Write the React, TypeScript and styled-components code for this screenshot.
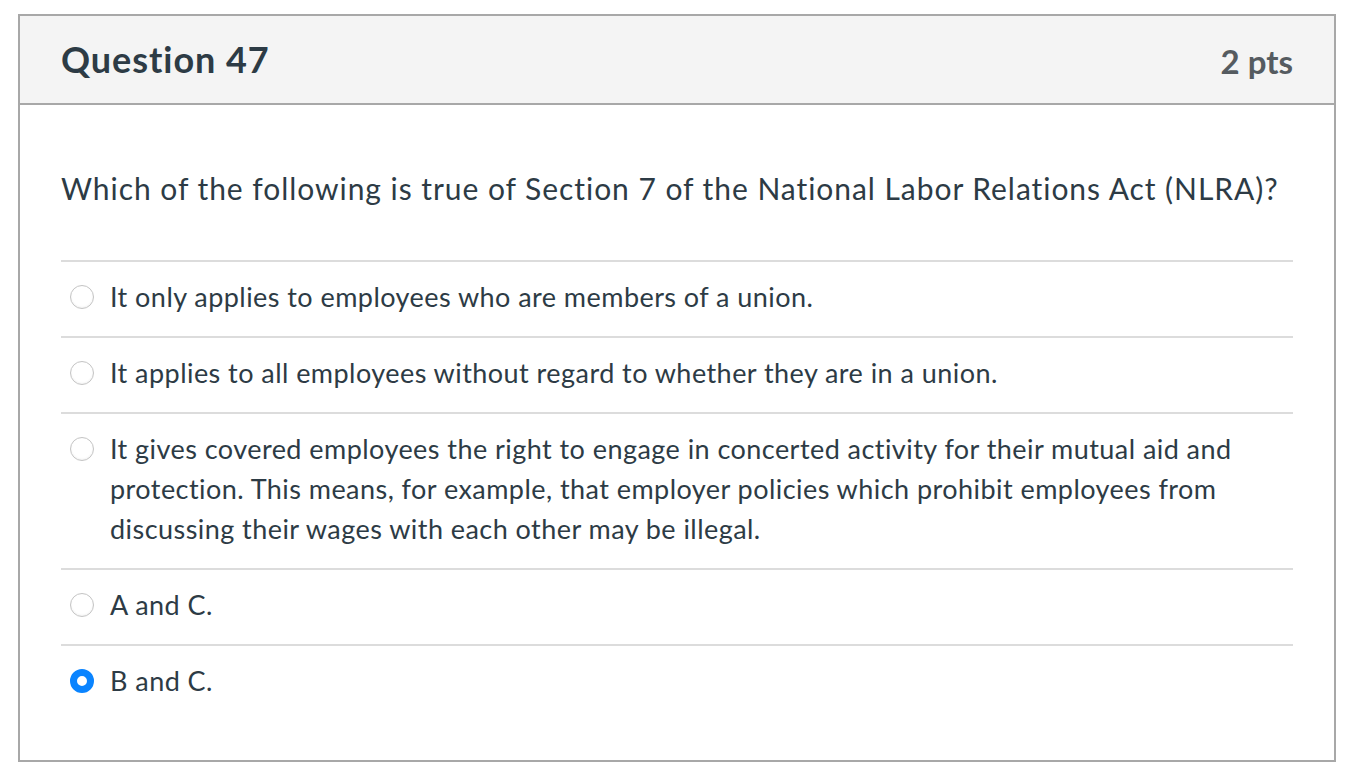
import styled, { createGlobalStyle } from "styled-components";
import { FC } from "react";

const GlobalStyle = createGlobalStyle`
  html, body {
    margin: 0;
    padding: 0;
    background: #fff;
    font-family: Lato, "Open Sans", sans-serif;
  }
`;

const answers = [
  "It only applies to employees who are members of a union.",
  "It applies to all employees without regard to whether they are in a union.",
  "It gives covered employees the right to engage in concerted activity for their mutual aid and protection. This means, for example, that employer policies which prohibit employees from discussing their wages with each other may be illegal.",
  "A and C.",
  "B and C.",
];

const Radio: FC<{ checked: boolean }> = ({ checked }) => (
  <RadioDot $checked={checked} />
);

export default function App() {
  const selected = 4;
  return (
    <Page>
      <GlobalStyle />
      <Card>
        <Header>
          <Title>Question 47</Title>
          <Points>2 pts</Points>
        </Header>
        <Body>
          <Prompt>
            Which of the following is true of Section 7 of the National Labor
            Relations Act (NLRA)?
          </Prompt>
          <AnswerList>
            {answers.map((answer, index) => (
              <Answer key={index}>
                <Radio checked={index === selected} />
                <AnswerText>{answer}</AnswerText>
              </Answer>
            ))}
          </AnswerList>
        </Body>
      </Card>
    </Page>
  );
}

const Page = styled.div`
  padding: 14px 16px 20px 18px;
`;

const Card = styled.div`
  width: 1318px;
  height: 748px;
  box-sizing: border-box;
  border: 2px solid #a8a8a8;
  background: #fff;
`;

const Header = styled.div`
  height: 89px;
  box-sizing: border-box;
  background: #f4f4f4;
  border-bottom: 2px solid #a8a8a8;
  display: flex;
  align-items: center;
  justify-content: space-between;
  padding: 0 41px 2px 41px;
`;

const Title = styled.h2`
  margin: 0;
  font-size: 36px;
  font-weight: 700;
  letter-spacing: 0.95px;
  color: #2d3b45;
`;

const Points = styled.div`
  margin-top: 4px;
  font-size: 33px;
  font-weight: 700;
  color: #555b60;
`;

const Body = styled.div`
  padding: 0 41px;
`;

const Prompt = styled.p`
  margin: 0;
  padding: 63px 0 52px;
  font-size: 30px;
  line-height: 40px;
  letter-spacing: 0.95px;
  color: #2d3b45;
`;

const AnswerList = styled.div`
  display: flex;
  flex-direction: column;
`;

const Answer = styled.div`
  display: flex;
  align-items: flex-start;
  gap: 16px;
  border-top: 2px solid #dcdcdc;
  padding: 15px 0 19px 9px;
`;

const RadioDot = styled.span<{ $checked: boolean }>`
  flex: none;
  width: 24px;
  height: 24px;
  margin-top: 8px;
  box-sizing: border-box;
  border-radius: 50%;
  background: #fff;
  border: 1px solid #c4c4c4;
  box-shadow: inset 0 -1px 2px rgba(0, 0, 0, 0.06);
  ${(p) =>
    p.$checked &&
    `
    border: 7px solid #0a84ff;
    box-shadow: none;
  `}
`;

const AnswerText = styled.div`
  font-size: 27px;
  line-height: 40px;
  letter-spacing: 0.45px;
  color: #2d3b45;
`;
